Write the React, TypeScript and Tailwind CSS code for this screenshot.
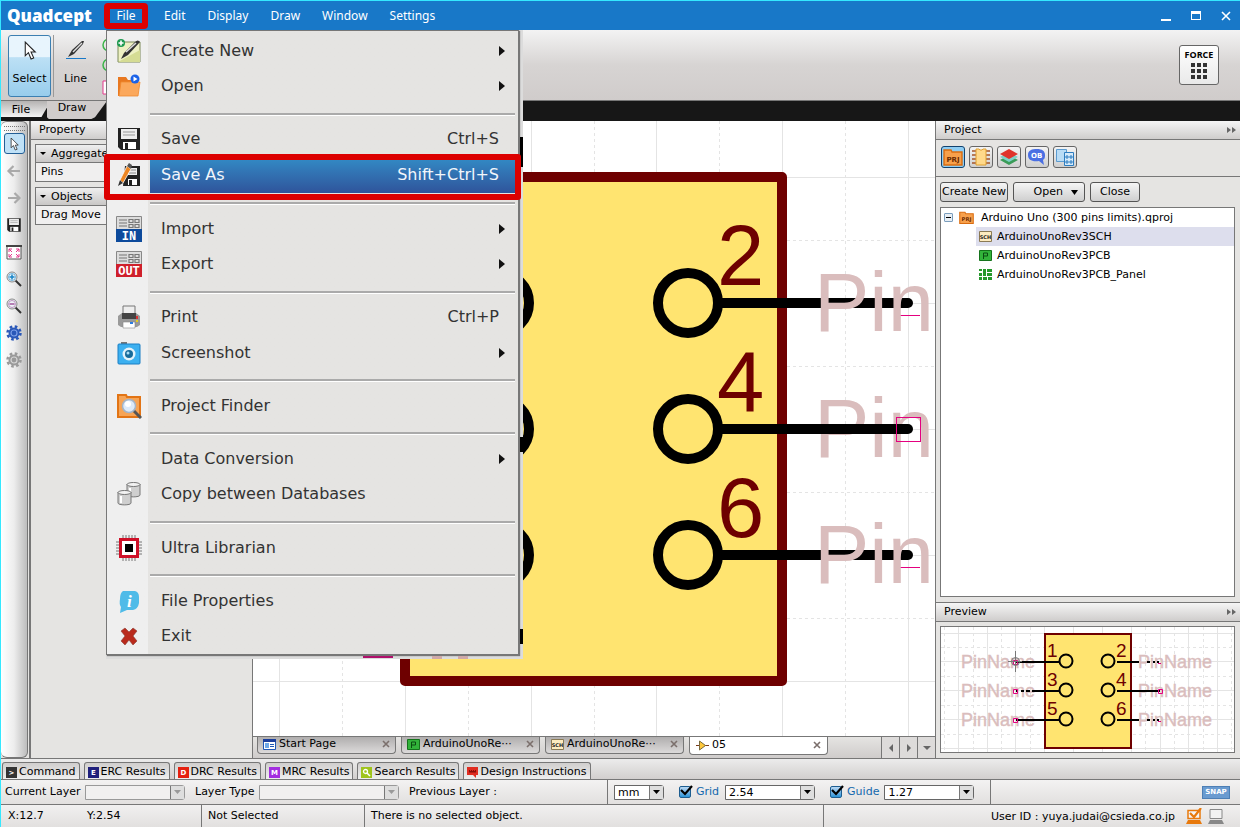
import React, {ReactElement, ReactNode} from "react";

type MenuEntry = {
    label: string;
    icon?: ReactNode;
    shortcut?: string;
    submenu?: boolean;
    active?: boolean;
};

const topMenus = ["Edit", "Display", "Draw", "Window", "Settings"];

const fileMenu: (MenuEntry | null)[] = [
    {label: "Create New", icon: <CreateIcon />, submenu: true},
    {label: "Open", icon: <OpenIcon />, submenu: true},
    null,
    {label: "Save", icon: <FloppyIcon />, shortcut: "Ctrl+S"},
    {label: "Save As", icon: <SaveAsIcon />, shortcut: "Shift+Ctrl+S", active: true},
    null,
    {label: "Import", icon: <InOutIcon text="IN" color="#0d4a9c" />, submenu: true},
    {label: "Export", icon: <InOutIcon text="OUT" color="#cf202b" />, submenu: true},
    null,
    {label: "Print", icon: <PrinterIcon />, shortcut: "Ctrl+P"},
    {label: "Screenshot", icon: <CameraIcon />, submenu: true},
    null,
    {label: "Project Finder", icon: <FinderIcon />},
    null,
    {label: "Data Conversion", submenu: true},
    {label: "Copy between Databases", icon: <DatabaseIcon />},
    null,
    {label: "Ultra Librarian", icon: <ChipIcon />},
    null,
    {label: "File Properties", icon: <InfoIcon />},
    {label: "Exit", icon: <ExitIcon />},
];

export default function App(): ReactElement {
    return (
        <div className="relative flex flex-col w-full min-h-screen bg-[#e5e4e2] border-l border-t border-[#35e8ff] text-[11px] leading-4 text-black font-['DejaVu_Sans',Verdana,sans-serif]">
            <TitleBar />
            <Ribbon />
            <div className="flex flex-row grow bg-[#e5e4e2]">
                <ToolStrip />
                <PropertyPanel />
                <Workspace />
                <ProjectPanel />
            </div>
            <ResultTabs />
            <LayerBar />
            <StatusBar />
            <FileMenu />
        </div>
    );
}

function TitleBar(): ReactElement {
    return (
        <header className="flex items-center h-[29px] bg-[#1878c8] text-white text-[12px] font-['Noto_Sans',sans-serif]">
            <h1 className="w-[95px] pl-[6px] text-[17px] font-extrabold font-['Open_Sans',sans-serif]">Quadcept</h1>
            <nav className="flex items-center gap-[18px]">
                <button className="ml-2 -mr-1 w-[44px] h-[26px] rounded-[4px] border-[6px] border-[#dc0000] bg-[#1878c8] leading-3">File</button>
                {topMenus.map((name) => (
                    <button key={name} className="px-[2px]">{name}</button>
                ))}
            </nav>
            <div className="flex items-center gap-[20px] ml-auto pr-[9px]">
                <button aria-label="Minimize" className="w-[10px] h-[10px] border-b-2 border-white" />
                <button aria-label="Maximize" className="w-[10px] h-[9px] border border-t-[3px] border-white" />
                <button aria-label="Close" className="w-[10px] h-[10px]">
                    <svg viewBox="0 0 10 10" className="w-full h-full" stroke="#fff" strokeWidth="1.6"><path d="M1 1l8 8M9 1l-8 8" /></svg>
                </button>
            </div>
        </header>
    );
}

function Ribbon(): ReactElement {
    return (
        <div>
            <div className="flex h-[71px] border-b border-[#777] bg-linear-to-b from-[#f3f3f3] via-[#d7d4d3] to-[#d0cccb]">
                <button className="flex flex-col items-center ml-[7px] mt-[5px] w-[43px] h-[62px] pt-[5px] rounded-[3px] border border-[#3c7fb1] bg-linear-to-b from-[#e8f5fd] from-35% via-[#bce0f5] via-36% to-[#98cdec]">
                    <Pointer className="w-[14px] h-[19px]" />
                    <span className="mt-[11px]">Select</span>
                </button>
                <button className="flex flex-col items-center ml-[2px] mt-[5px] w-[44px] h-[62px] pt-[5px] border-l border-[#999]">
                    <svg viewBox="0 0 20 20" className="w-[20px] h-[20px]">
                        <path d="M2 17l4-7L16 1l2 0-1 3-9 10z" fill="#333" />
                        <path d="M7 12l9-9" stroke="#ddd" strokeWidth="1.4" />
                        <path d="M0 18.500h20" stroke="#1878c8" />
                    </svg>
                    <span className="mt-[11px]">Line</span>
                </button>
                <svg viewBox="0 0 20 64" className="w-[20px] h-[64px] ml-[5px] mt-[4px]" fill="none">
                    <circle cx="7" cy="11" r="6" stroke="#3bb54a" strokeWidth="1.500" />
                    <circle cx="7" cy="31" r="6" stroke="#3bb54a" strokeWidth="1.500" />
                    <path d="M1 47h13v13H1z" stroke="#e4388c" fill="#fff" />
                </svg>
                <button className="flex flex-col items-center ml-auto mr-[21px] mt-[15px] w-[40px] h-[40px] pt-[3px] rounded-[3px] border border-[#666] bg-linear-to-b from-white to-[#e9e9e9]">
                    <span className="text-[9px] leading-3 font-bold font-['Open_Sans',sans-serif]">FORCE</span>
                    <svg viewBox="0 0 16 16" className="w-[16px] h-[16px] mt-[2px]" fill="#333">
                        {[0, 6, 12].map((x) => [0, 6, 12].map((y) => <rect key={`${x}-${y}`} x={x} y={y} width="4" height="4" />))}
                    </svg>
                </button>
            </div>
            <div className="flex h-[20px] bg-[#171717]">
                <button className="w-[46px] h-[16px] pt-px pr-[6px] leading-3 bg-linear-to-b from-[#b5b3b2] to-[#f5f5f5] [clip-path:polygon(0_0,100%_0,100%_40%,88%_100%,0_100%)]">File</button>
                <button className="w-[60px] h-[18px] pb-1 pr-[10px] bg-[#d0cccb] leading-3 [clip-path:polygon(0_0,100%_0,80%_90%,74%_100%,3%_100%,0_90%)]">Draw</button>
            </div>
        </div>
    );
}

function ToolStrip(): ReactElement {
    return (
        <div className="flex flex-col items-center shrink-0 w-[27px] mr-[1px] pt-[4px] rounded-md border border-[#777] border-l-0 bg-linear-to-r from-white via-[#ededed] to-[#bdbdbd]">
            <div className="w-[21px] h-[5px] border-y border-dotted border-[#777]" />
            <div className="flex flex-col items-center gap-[6px] mt-[2px]">
                <ToolButton label="Select" active><Pointer className="w-[9px] h-[14px]" /></ToolButton>
                <ToolButton label="Undo">
                    <svg viewBox="0 0 16 16" className="w-4 h-4" fill="none"><path d="M7.500 3L2.500 8l5 5M3 8h11" stroke="#aaa" strokeWidth="2.200" /></svg>
                </ToolButton>
                <ToolButton label="Redo">
                    <svg viewBox="0 0 16 16" className="w-4 h-4" fill="none"><path d="M8.500 3l5 5-5 5M13 8H2" stroke="#aaa" strokeWidth="2.200" /></svg>
                </ToolButton>
                <ToolButton label="Save"><span className="w-4 h-4"><FloppyIcon /></span></ToolButton>
                <ToolButton label="Fit">
                    <svg viewBox="0 0 16 16" className="w-4 h-4" fill="none">
                        <path d="M1 2h14v13H1z" fill="#fff" stroke="#555" />
                        <path d="M0 1h16v2H0z" fill="#444" />
                        <path d="M3 8V5h3M3 5l3 3M10 5h3v3M13 5l-3 3M3 10v3h3M3 13l3-3M10 13h3v-3M13 13l-3-3" stroke="#e4388c" />
                    </svg>
                </ToolButton>
                <ToolButton label="Zoom in"><Magnifier color="#1583c7" plus /></ToolButton>
                <ToolButton label="Zoom out"><Magnifier color="#a0569c" /></ToolButton>
                <ToolButton label="Settings"><Gear color="#2a58b8" inner="#7da0e8" /></ToolButton>
                <ToolButton label="Options"><Gear color="#999" inner="#d5d5d5" /></ToolButton>
            </div>
        </div>
    );
}

function ToolButton(props: {label: string; active?: boolean; children: ReactNode}): ReactElement {
    return (
        <button
            aria-label={props.label}
            className={props.active
                ? "flex items-center justify-center w-[21px] h-[21px] rounded-[3px] border border-[#235f96] bg-[#bfe1f7]"
                : "flex items-center justify-center w-[21px] h-[21px]"}
        >
            {props.children}
        </button>
    );
}

function PanelHeader(props: {title: string; arrows?: boolean}): ReactElement {
    return (
        <div className="flex items-center h-[19px] pl-2 pr-1 pb-px border-b border-[#777] bg-linear-to-b from-[#f5f5f5] to-[#cfcdcc]">
            <h2>{props.title}</h2>
            {props.arrows && (
                <svg viewBox="0 0 9 6" className="w-[9px] h-[6px] ml-auto" fill="#666"><path d="M0 0l4 3-4 3zM5 0l4 3-4 3z" /></svg>
            )}
        </div>
    );
}

function PropertyPanel(): ReactElement {
    return (
        <section className="shrink-0 w-[224px] border-l-2 border-r border-[#777]">
            <PanelHeader title="Property" />
            <div className="flex flex-col gap-[5px] pl-1 pt-1">
                <PropertyGroup title="Aggregate" value="Pins" />
                <PropertyGroup title="Objects" value="Drag Move" />
            </div>
        </section>
    );
}

function PropertyGroup(props: {title: string; value: string}): ReactElement {
    return (
        <div className="border border-[#777]">
            <button className="flex items-center w-full h-[18px] pl-1 gap-[5px] border-b border-[#777] bg-linear-to-b from-[#efefef] to-[#c9c7c6]">
                <svg viewBox="0 0 6 3" className="w-[6px] h-[3px]"><path d="M0 0h6L3 3z" /></svg>
                {props.title}
            </button>
            <div className="flex items-center h-[18px] pl-[5px] bg-[#f0efef]">{props.value}</div>
        </div>
    );
}

function Workspace(): ReactElement {
    return (
        <main className="flex flex-col grow min-w-0">
            <div className="grow bg-white">
                <svg viewBox="253 121 682 615" preserveAspectRatio="xMinYMin slice" className="block w-full h-full">
                    <g stroke="#e4e4e4">
                        {[279, 405, 531, 656, 782, 908].map((x) => <path key={x} d={`M${x}.5 121v615`} />)}
                        {[177, 303, 429, 555, 681].map((y) => <path key={y} d={`M253 ${y}.5h682`} />)}
                        <g strokeDasharray="3 3">
                            {[342, 468, 594, 719, 845].map((x) => <path key={x} d={`M${x}.5 121v615`} />)}
                            {[240, 366, 492, 618].map((y) => <path key={y} d={`M253 ${y}.5h682`} />)}
                        </g>
                    </g>
                    <rect x="405" y="177" width="377" height="504" fill="#ffe470" stroke="#6e0000" strokeWidth="10" strokeLinejoin="round" />
                    {[303, 429, 555].map((y, i) => (
                        <g key={y}>
                            {i === 1 && <PinText y={y} />}
                            <g fill="none" stroke="#000" strokeWidth="10" strokeLinecap="round">
                                <circle cx="499" cy={y} r="30" />
                                <circle cx="688" cy={y} r="30" />
                                <path d={`M722 ${y}H908`} />
                            </g>
                            {i === 1
                                ? <rect x="896.5" y={y - 11.5} width="24" height="24" fill="none" stroke="#e4007f" />
                                : <path d={`M900 ${y + 12}.5h20`} stroke="#e4007f" />}
                            {i !== 1 && <PinText y={y} />}
                            <text x="717" y={y - 18} fontSize="85" fill="#6e0000" fontFamily="Liberation Sans, Arial, sans-serif">{(i + 1) * 2}</text>
                        </g>
                    ))}
                </svg>
            </div>
            <div className="flex h-[22px] pl-1 gap-[5px] border-t border-[#777] bg-linear-to-b from-[#e5e4e2] to-[#cfcccb]">
                <DocTab title="Start Page" icon={<PageIcon />} />
                <DocTab title="ArduinoUnoRe···" icon={<PcbIcon />} />
                <DocTab title="ArduinoUnoRe···" icon={<SchIcon />} />
                <DocTab title="05" icon={<GateIcon />} active />
                <div className="flex ml-auto">
                    <StripButton label="Previous tab" d="M6 0L2 4l4 4z" />
                    <StripButton label="Next tab" d="M2 0l4 4-4 4z" />
                    <StripButton label="Tab list" d="M0 2h8L4 6z" />
                </div>
            </div>
        </main>
    );
}

function PinText(props: {y: number}): ReactElement {
    return <text x="814" y={props.y + 28} fontSize="83" fill="#dabdbd" fontFamily="Liberation Sans, Arial, sans-serif">Pin</text>;
}

function DocTab(props: {title: string; icon: ReactNode; active?: boolean}): ReactElement {
    return (
        <div
            className={props.active
                ? "flex items-center w-[139px] h-[18px] px-[6px] pb-px gap-[3px] rounded-b-[4px] border border-t-0 border-[#777] bg-white"
                : "flex items-center w-[139px] h-[17px] px-[5px] pb-[2px] gap-[3px] rounded-b-[4px] border border-t-0 border-[#777] bg-linear-to-b from-[#b0aeae] to-[#dcdada]"}
        >
            <span className="w-[13px] h-[11px]">{props.icon}</span>
            <button className="whitespace-nowrap">{props.title}</button>
            <button aria-label="Close tab" className="ml-auto">
                <svg viewBox="0 0 8 8" className="w-[8px] h-[8px]" stroke="#7b6f6c" strokeWidth="1.6"><path d="M1 1l6 6M7 1L1 7" /></svg>
            </button>
        </div>
    );
}

function StripButton(props: {label: string; d: string}): ReactElement {
    return (
        <button aria-label={props.label} className="flex items-center justify-center w-[18px] border-l border-[#777] bg-[#dddbda]">
            <svg viewBox="0 0 8 8" className="w-[8px] h-[8px]" fill="#666"><path d={props.d} /></svg>
        </button>
    );
}

function ProjectPanel(): ReactElement {
    return (
        <aside className="flex flex-col shrink-0 w-[305px] border-l border-[#777]">
            <PanelHeader title="Project" arrows />
            <div className="flex gap-1 h-[37px] pl-[5px] pt-[6px] border-b border-[#777]">
                <PanelButton label="Project" active><PrjIcon /></PanelButton>
                <PanelButton label="Components">
                    <svg viewBox="0 0 20 18" className="w-full h-full">
                        <path d="M1 3h18M1 7h18M1 11h18M1 15h18" stroke="#a5562a" strokeWidth="1.300" />
                        <path d="M5 1h3l1 1h2l1-1h3v16H5z" fill="#ffd98a" stroke="#e0a030" />
                    </svg>
                </PanelButton>
                <PanelButton label="Layers">
                    <svg viewBox="0 0 20 18" className="w-full h-full">
                        <path d="M1 12l9-5 9 5-9 5z" fill="#3a9c58" /><path d="M1 9l9-5 9 5-9 5z" fill="#7fd0c8" /><path d="M1 6l9-5 9 5-9 5z" fill="#e0332b" />
                    </svg>
                </PanelButton>
                <PanelButton label="Object browser">
                    <svg viewBox="0 0 20 18" className="w-full h-full">
                        <path d="M10 1c5 0 8 2 8 6s-1 4-2 5l1 5-5-4c-7 1-11-1-11-6s4-6 9-6z" fill="#4a6fe3" />
                        <text x="4" y="10" fontSize="7" fontWeight="bold" fill="#fff">OB</text>
                    </svg>
                </PanelButton>
                <PanelButton label="Replace">
                    <svg viewBox="0 0 20 18" className="w-full h-full">
                        <path d="M1.500 1.500h10v12h-10z" fill="#b9dcf5" stroke="#5b9bd0" /><path d="M9.500 4.500h9v13h-9z" fill="#d5eafa" stroke="#2d7dc0" />
                        <path d="M11 8h2v2h-2zM15 8h2v2h-2zM11 13h2v2h-2zM15 13h2v2h-2z" fill="none" stroke="#2d7dc0" />
                    </svg>
                </PanelButton>
            </div>
            <div className="flex gap-[5px] pl-[4px] pt-[5px] pb-[5px]">
                <button className="w-[68px] h-[20px] leading-3 whitespace-nowrap rounded-[3px] border border-[#555] bg-linear-to-b from-[#f5f5f5] to-[#cfcfcf]">Create New</button>
                <button className="flex items-center justify-end w-[72px] h-[20px] pr-[6px] gap-2 rounded-[3px] border border-[#555] bg-linear-to-b from-[#f5f5f5] to-[#cfcfcf]">
                    Open
                    <svg viewBox="0 0 7 5" className="w-[7px] h-[5px]"><path d="M0 0h7L3.500 5z" /></svg>
                </button>
                <button className="w-[50px] h-[20px] leading-3 rounded-[3px] border border-[#555] bg-linear-to-b from-[#f5f5f5] to-[#cfcfcf]">Close</button>
            </div>
            <div className="grow ml-[4px] mr-[5px] border border-[#777] bg-white">
                <div className="flex items-center h-[19px] pl-[3px]">
                    <button aria-label="Collapse" className="flex items-center justify-center w-[9px] h-[9px] rounded-[1px] border border-[#7b9ebd] bg-[#e8eef4]"><span className="w-[5px] h-px bg-black" /></button>
                    <span className="w-[15px] h-[15px] ml-[6px] mr-[7px]"><PrjIcon /></span>
                    Arduino Uno (300 pins limits).qproj
                </div>
                <ul className="pl-[35px]">
                    <li className="flex items-center gap-[5px] h-[19px] pl-[3px] bg-[#dddeed]"><span className="w-[13px] h-[11px]"><SchIcon /></span>ArduinoUnoRev3SCH</li>
                    <li className="flex items-center gap-[5px] h-[19px] pl-[3px]"><span className="w-[13px] h-[11px]"><PcbIcon /></span>ArduinoUnoRev3PCB</li>
                    <li className="flex items-center gap-[5px] h-[19px] pl-[3px]">
                        <svg viewBox="0 0 13 11" className="w-[13px] h-[11px]" fill="#27982c"><path d="M0 0h3v2H0zM0 4h3v3H0zM0 8h3v3H0zM4 0h3v7H4zM8 0h5v3H8zM8 4h5v3H8zM4 8h4v3H4zM9 8h4v3H9z" /></svg>
                        ArduinoUnoRev3PCB_Panel
                    </li>
                </ul>
            </div>
            <div className="mt-[5px] border-t border-[#777]">
                <PanelHeader title="Preview" arrows />
            </div>
            <div className="mt-1 mb-[5px] ml-[4px] mr-[5px] border border-[#777] bg-white">
                <Preview />
            </div>
        </aside>
    );
}

function PanelButton(props: {label: string; active?: boolean; children: ReactNode}): ReactElement {
    return (
        <button
            aria-label={props.label}
            className={props.active
                ? "w-[24px] h-[22px] p-px rounded-[3px] border border-[#12426e] bg-[#8ecdf3]"
                : "w-[24px] h-[22px] p-px rounded-[3px] border border-[#666] bg-linear-to-b from-[#f4f4f4] to-[#cfcfcf]"}
        >
            {props.children}
        </button>
    );
}

function Preview(): ReactElement {
    const rows = [661, 690, 719];
    return (
        <svg viewBox="941 627 293 125" className="block w-full" fontFamily="Liberation Sans, Arial, sans-serif">
            <g stroke="#e4e4e4" fill="none">
                {[958, 987, 1015, 1044, 1073, 1102, 1131, 1160, 1188, 1217].map((x) => <path key={x} d={`M${x}.5 627v125`} />)}
                {[633, 661, 690, 719, 748].map((y) => <path key={y} d={`M941 ${y}.5h294`} />)}
                <g strokeDasharray="3 3">
                    {[944, 973, 1001, 1030, 1145, 1174, 1203, 1231].map((x) => <path key={x} d={`M${x}.5 627v125`} />)}
                    {[647, 676, 705, 734].map((y) => <path key={y} d={`M941 ${y}.5h294`} />)}
                </g>
            </g>
            <rect x="1045" y="634" width="86" height="114" fill="#ffe470" stroke="#6e0000" strokeWidth="2" />
            {rows.map((y, i) => (
                <g key={y}>
                    <g fontSize="18" fill="#dabdbd" stroke="#dabdbd" strokeWidth=".4">
                        <text x="961" y={y + 7}>PinName</text>
                        <text x="1138" y={y + 7}>PinName</text>
                    </g>
                    <g fill="none" stroke="#000" strokeWidth="2">
                        <circle cx="1066" cy={y} r="6.500" />
                        <circle cx="1108" cy={y} r="6.500" />
                        <path d={i === 1 ? `M1016 ${y + 1}h2m3 0h3m2 0h4m2 0h27` : `M1016 ${y + 1}h43`} />
                        <path d={i === 1 ? `M1117 ${y + 1}h43` : `M1117 ${y + 1}h22m8 0h3m3 0h2m2 0h2`} />
                    </g>
                    <path d={`M1013.500 ${y - 1}.5h4v4h-4z`} fill="none" stroke="#e4007f" />
                    {i === 1
                        ? <path d={`M1158.500 ${y - 1}.5h4v4h-4z`} fill="none" stroke="#e4007f" />
                        : <path d={`M1158 ${y + 2}.5h3`} stroke="#e4007f" />}
                    <g fontSize="19" fill="#6e0000">
                        <text x="1047" y={y - 4}>{i * 2 + 1}</text>
                        <text x="1116" y={y - 4}>{i * 2 + 2}</text>
                    </g>
                </g>
            ))}
            <g fill="none" stroke="#777"><circle cx="1015.500" cy="661.500" r="4" /><path d="M1015.500 651v21M1008 661.500h14" /></g>
        </svg>
    );
}

function ResultTabs(): ReactElement {
    return (
        <div className="flex items-end h-[21px] pl-px gap-1 border-t border-[#777] bg-linear-to-b from-[#ececec] to-[#d2cfce]">
            <ResultTab title="Command" icon={<LetterIcon color="#333" text=">" />} />
            <ResultTab title="ERC Results" icon={<LetterIcon color="#20207c" text="E" />} />
            <ResultTab title="DRC Results" icon={<LetterIcon color="#e5200f" text="D" />} />
            <ResultTab title="MRC Results" icon={<LetterIcon color="#a32ee0" text="M" />} />
            <ResultTab
                title="Search Results"
                icon={(
                    <svg viewBox="0 0 11 11" className="w-[11px] h-[11px]">
                        <path d="M0 0h11v11H0z" fill="#9fc41c" /><circle cx="4.500" cy="4.500" r="2" fill="none" stroke="#fff" strokeWidth="1.300" /><path d="M6 6l3 3" stroke="#fff" strokeWidth="1.500" />
                    </svg>
                )}
            />
            <ResultTab
                title="Design Instructions"
                icon={(
                    <svg viewBox="0 0 11 11" className="w-[11px] h-[11px]">
                        <path d="M0 0h11v8H9v3L6 8H0z" fill="#e02c20" /><path d="M2 5.500V3h1v1h1V3h1v1h1V3h1v1h1V3h1v2.500z" fill="#8a0d08" />
                    </svg>
                )}
            />
        </div>
    );
}

function ResultTab(props: {title: string; icon: ReactNode}): ReactElement {
    return (
        <button className="flex items-center h-[17px] pt-[2px] px-[3px] gap-[2px] rounded-t-[3px] border border-b-0 border-[#777] bg-linear-to-b from-[#d0cecd] to-[#efefef] whitespace-nowrap">
            {props.icon}
            {props.title}
        </button>
    );
}

function LayerBar(): ReactElement {
    return (
        <div className="flex items-stretch h-[25px] border-t border-[#777] bg-linear-to-b from-[#f3f2f2] to-[#e2e0df]">
            <div className="flex items-center w-[607px] shrink-0 pl-1 gap-[6px] whitespace-nowrap border-r border-[#777]">
                <label htmlFor="current-layer" className="w-[74px]">Current Layer</label>
                <div className="w-[100px]"><Select id="current-layer" value="" disabled /></div>
                <label htmlFor="layer-type" className="ml-1 w-[58px]">Layer Type</label>
                <div className="w-[140px]"><Select id="layer-type" value="" disabled /></div>
                <span className="ml-1">Previous Layer :</span>
            </div>
            <div className="flex items-center w-[383px] shrink-0 pl-[6px] border-r border-[#777]">
                <div className="w-[50px] mr-[15px]"><Select id="unit" label="Unit" value="mm" /></div>
                <CheckLabel label="Grid" />
                <div className="w-[90px] ml-[6px] mr-[15px]"><Select id="grid" label="Grid size" value="2.54" /></div>
                <CheckLabel label="Guide" />
                <div className="w-[90px] ml-[5px]"><Select id="guide" label="Guide size" value="1.27" /></div>
            </div>
            <button className="self-center ml-auto mr-[10px] w-[28px] h-[13px] border border-[#4d7fb5] bg-[#6a9bd0] text-white text-[7px] leading-[9px] font-bold">SNAP</button>
        </div>
    );
}

function Select(props: {id: string; value: string; label?: string; disabled?: boolean}): ReactElement {
    return (
        <div className="relative">
            <select
                id={props.id}
                aria-label={props.label}
                disabled={props.disabled}
                className={props.disabled
                    ? "block appearance-none w-full h-[15px] rounded-r-[3px] border border-[#999] bg-[#f1f0f0]"
                    : "block appearance-none w-full h-[15px] pl-[3px] leading-[13px] rounded-r-[3px] border border-[#666] bg-white"}
            >
                <option>{props.value}</option>
            </select>
            <span className="absolute right-px top-px flex items-center justify-center w-[14px] h-[13px] border-l border-[#777] bg-[#dedede] pointer-events-none">
                <svg viewBox="0 0 7 4" className="w-[7px] h-[4px]" fill={props.disabled ? "#999" : "#000"}><path d="M0 0h7L3.500 4z" /></svg>
            </span>
        </div>
    );
}

function CheckLabel(props: {label: string}): ReactElement {
    return (
        <label className="relative flex items-center gap-[5px] text-[#1468ad]">
            <input type="checkbox" defaultChecked className="appearance-none w-[12px] h-[12px] rounded-[2px] border border-[#1d5d90] bg-linear-to-b from-[#b8d8f3] to-[#2494d8]" />
            <svg viewBox="0 0 14 12" className="absolute left-0 top-[1px] w-[14px] h-[12px] pointer-events-none" fill="none" stroke="#000" strokeWidth="2.200"><path d="M2 5l4 4 7-8" /></svg>
            {props.label}
        </label>
    );
}

function StatusBar(): ReactElement {
    return (
        <footer className="flex items-stretch h-[23px] border-t border-[#777] bg-linear-to-b from-[#f1f0f0] to-[#e2e0df] leading-[21px]">
            <div className="flex w-[201px] pl-[7px] border-r border-[#777]">
                <span className="w-[79px]">X:12.7</span>
                <span>Y:2.54</span>
            </div>
            <div className="w-[163px] pl-[6px] border-r border-[#777]">Not Selected</div>
            <div className="w-[459px] pl-[6px] border-r border-[#777]">There is no selected object.</div>
            <div className="flex items-center ml-auto pr-4 gap-[6px] whitespace-nowrap">
                <span className="mr-[5px]">User ID : yuya.judai@csieda.co.jp</span>
                <svg viewBox="0 0 16 16" className="w-4 h-4" fill="none"><path d="M2 2.500h12v8H2z" fill="#f5f5f5" stroke="#e8790c" strokeWidth="1.500" /><path d="M2 12h12l2 4H0z" fill="#e8790c" /><path d="M4 5l4 4 7-9" stroke="#e8790c" strokeWidth="2.200" /></svg>
                <svg viewBox="0 0 16 16" className="w-4 h-4"><path d="M2 1.500h12v9H2z" fill="#f2f2f2" stroke="#888" /><path d="M2 12h12l2 4H0z" fill="#888" /></svg>
            </div>
        </footer>
    );
}

function FileMenu(): ReactElement {
    return (
        <div className="absolute left-[105px] top-[29px] w-[417px] pr-1 pb-1 bg-[#dcdcdc] text-[16px] leading-5 text-[#333]">
            {/* canvas parts that show through the shadow */}
            <span className="absolute right-0 top-[107px] w-[3px] h-[30px] bg-black" />
            <span className="absolute right-0 top-[407px] w-[3px] h-[15px] bg-black" />
            <span className="absolute right-0 top-[599px] w-[3px] h-[15px] bg-black" />
            <span className="absolute left-[257px] bottom-px w-[30px] h-[2px] bg-[#b0106c]" />
            <span className="absolute left-[326px] bottom-0 w-[10px] h-[3px] bg-[#cfa9a9]" />
            <span className="absolute left-[352px] bottom-0 w-[10px] h-[3px] bg-[#cfa9a9]" />
            <ul className="flex flex-col h-[625px] pt-[2px] border border-[#777] bg-linear-to-r from-[#efefef] from-10% to-[#e5e4e2] to-10% shadow-[1px_1px_1px_#777]">
                {fileMenu.map((entry, i) => entry
                    ? <MenuRow key={entry.label} entry={entry} />
                    : (
                        <li key={i} className="flex items-center flex-1 pl-[43px] pr-[3px]">
                            <hr className="w-full h-[3px] mt-[3px] border-t-2 border-b border-t-[#aaa] border-b-white" />
                        </li>
                    ))}
            </ul>
        </div>
    );
}

function MenuRow(props: {entry: MenuEntry}): ReactElement {
    const {label, icon, shortcut, submenu, active} = props.entry;
    return (
        <li className={active ? "relative z-10 flex flex-2" : "flex flex-2"}>
            <span className="flex items-center justify-center shrink-0 w-[43px]"><span className="w-[26px] h-[26px]">{icon}</span></span>
            <button
                className={active
                    ? "flex items-center grow h-[34px] mt-[2px] mr-[3px] pb-[2px] pl-[11px] pr-[16px] bg-linear-to-b from-[#3289c4] to-[#2f549b] text-[#f2f6fb]"
                    : "flex items-center grow mr-[3px] pl-[11px] pr-[16px]"}
            >
                {label}
                {shortcut && <span className="ml-auto">{shortcut}</span>}
                {submenu && <svg viewBox="0 0 6 10" className="w-[6px] h-[10px] ml-auto -mr-[6px]"><path d="M0 0l6 5-6 5z" fill="#111" /></svg>}
            </button>
            {active && <span className="absolute -left-[3px] -right-[3px] -top-[3px] -bottom-[7px] rounded-[3px] border-[6px] border-[#dc0000] pointer-events-none" />}
        </li>
    );
}

function Pointer(props: {className: string}): ReactElement {
    return <svg viewBox="0 0 12 18" className={props.className}><path d="M1.500 1v13l3-3 2.500 6 2.500-1L7 10.500h4z" fill="#fff" stroke="#222" /></svg>;
}

function Magnifier(props: {color: string; plus?: boolean}): ReactElement {
    return (
        <svg viewBox="0 0 16 16" className="w-4 h-4" fill="none">
            <path d="M9 9l6 6" stroke="#333" strokeWidth="2" />
            <circle cx="6" cy="6" r="5" fill="#eef4f8" stroke="#888" />
            <circle cx="6" cy="6" r="3.500" stroke={props.color} opacity=".6" />
            <path d={props.plus ? "M3.500 6h5M6 3.500v5" : "M3.500 6h5"} stroke={props.color} strokeWidth="1.500" />
        </svg>
    );
}

function Gear(props: {color: string; inner: string}): ReactElement {
    return (
        <svg viewBox="0 0 16 16" className="w-4 h-4" fill="none">
            <circle cx="8" cy="8" r="6.500" stroke={props.color} strokeWidth="2.500" strokeDasharray="2.600 2.500" />
            <circle cx="8" cy="8" r="5.500" fill={props.color} />
            <circle cx="8" cy="8" r="3" fill={props.color} stroke={props.inner} strokeWidth="1.200" />
        </svg>
    );
}

function LetterIcon(props: {color: string; text: string}): ReactElement {
    return (
        <svg viewBox="0 0 11 11" className="w-[11px] h-[11px]">
            <path d="M0 0h11v11H0z" fill={props.color} />
            <text x="5.500" y="8" textAnchor="middle" fontSize="7" fontWeight="bold" fill="#fff">{props.text}</text>
        </svg>
    );
}

function PrjIcon(): ReactElement {
    return (
        <svg viewBox="0 0 20 18" className="block w-full h-full">
            <path d="M1 2h7l1 2h10v13H1z" fill="#f7a04b" stroke="#d96c10" strokeWidth="1.400" />
            <text x="10" y="14" textAnchor="middle" fontSize="7" fontWeight="bold" fill="#6b2a00">PRJ</text>
        </svg>
    );
}

function SchIcon(): ReactElement {
    return (
        <svg viewBox="0 0 13 11" className="block w-full h-full">
            <path d="M.5.5h12v10H.5z" fill="#fdebc0" stroke="#8a7a55" />
            <text x="6.500" y="8" textAnchor="middle" fontSize="5" fontWeight="bold" fill="#222">SCH</text>
        </svg>
    );
}

function PcbIcon(): ReactElement {
    return (
        <svg viewBox="0 0 13 11" className="block w-full h-full">
            <path d="M.5.5h12v10H.5z" fill="#32b33a" stroke="#15731c" />
            <path d="M4.500 9V3h4v3h-4" fill="none" stroke="#0b4d12" />
        </svg>
    );
}

function PageIcon(): ReactElement {
    return (
        <svg viewBox="0 0 13 11" className="block w-full h-full">
            <path d="M.5.5h12v10H.5z" fill="#fff" stroke="#1f57b5" /><path d="M0 0h13v3H0z" fill="#1c3f9c" />
            <path d="M2 4h4v5H2z" fill="#6fa8e8" /><path d="M7 5.500h4M7 7.500h4" stroke="#1f57b5" />
        </svg>
    );
}

function GateIcon(): ReactElement {
    return <svg viewBox="0 0 13 11" className="block w-full h-full"><path d="M0 5.500h13" stroke="#7a3b1a" /><path d="M3.500 1l6 4.500-6 4.500z" fill="#ffc93c" stroke="#7a6a3a" /></svg>;
}

function CreateIcon(): ReactElement {
    return (
        <svg viewBox="0 0 26 26">
            <path d="M2 4h22v20H2z" fill="#edf0c3" stroke="#7c8a5a" />
            <path d="M2 24h22V12z" fill="#d5dc94" />
            <circle cx="5" cy="5" r="4" fill="#1d9a50" /><path d="M2.500 5h5M5 2.500v5" stroke="#fff" strokeWidth="1.600" />
            <path d="M5 21l3-6L19 4q3-3 5 0L12 17z" fill="#333" /><path d="M10 14L20 5" stroke="#ddd" strokeWidth="1.600" />
        </svg>
    );
}

function OpenIcon(): ReactElement {
    return (
        <svg viewBox="0 0 26 26">
            <path d="M2 4h8l2 3h8v16H2z" fill="#e87820" /><path d="M5 9h19l-2 14H3z" fill="#fba85c" stroke="#f08a30" strokeWidth=".8" />
            <circle cx="19" cy="6" r="4.500" fill="#1b62e8" /><path d="M17.500 3.500l4 2.500-4 2.500z" fill="#fff" />
        </svg>
    );
}

function FloppyIcon(): ReactElement {
    return (
        <svg viewBox="0 0 26 26" className="block w-full h-full">
            <path d="M2 2h22v22H5l-3-3z" fill="#222" /><path d="M5 3h16v10H5z" fill="#eee" />
            <path d="M7 6h12M7 9h12" stroke="#999" /><path d="M7 16h13v7H7z" fill="#fff" /><path d="M9 17h3v6H9z" fill="#222" />
        </svg>
    );
}

function SaveAsIcon(): ReactElement {
    return (
        <svg viewBox="0 0 26 26">
            <path d="M9 4h15v20H7z" fill="#222" /><path d="M12 6h9v7h-9z" fill="#eee" /><path d="M13 8h7M13 11h7" stroke="#888" />
            <path d="M12 17h9v6h-9z" fill="#fff" /><path d="M13 18h3v5h-3z" fill="#222" />
            <path d="M4 18L11 4l4 3-8 14z" fill="#ee8622" stroke="#fff" strokeWidth=".8" /><path d="M11 4l2-3 3 2-1 4z" fill="#555" /><path d="M4 18l3 3-5 3z" fill="#333" />
        </svg>
    );
}

function InOutIcon(props: {text: string; color: string}): ReactElement {
    return (
        <svg viewBox="0 0 26 26">
            <path d="M.5.5h25v13H.5z" fill="#ddd" stroke="#888" />
            <path d="M3 4h8M3 7h8M3 10h8M13 3.500h4v3h-4zM19 3.500h4v3h-4zM13 8.500h4v3h-4zM19 8.500h4v3h-4z" fill="none" stroke="#777" strokeWidth="1.200" />
            <path d="M0 13h26v13H0z" fill={props.color} />
            <text x="13" y="23.500" textAnchor="middle" fontSize="12" fontWeight="bold" fill="#fff" fontFamily="Liberation Mono, monospace">{props.text}</text>
        </svg>
    );
}

function PrinterIcon(): ReactElement {
    return (
        <svg viewBox="0 0 26 26">
            <path d="M7 2h12v9H7z" fill="#eee" stroke="#777" /><path d="M2 12l4-3h14l4 3v9l-3 2H5l-3-2z" fill="#9a9a9a" />
            <path d="M6 9h14v6H6z" fill="#444" /><path d="M7 18h12v6H7z" fill="#fff" stroke="#888" strokeWidth=".6" />
            <path d="M14 18h3v2h-3z" fill="#2a7de0" /><path d="M20 16h2v2h-2z" fill="#e6cf1c" /><path d="M20 12h2v3h-2z" fill="#d33" />
        </svg>
    );
}

function CameraIcon(): ReactElement {
    return (
        <svg viewBox="0 0 26 26">
            <path d="M5 2h6v3H5z" fill="#777" /><rect x="2" y="4" width="22" height="20" rx="1" fill="#3cb0f0" stroke="#1b7ec4" />
            <circle cx="13" cy="14" r="6.500" fill="#e4f2fa" /><circle cx="13" cy="14" r="4" fill="#176a9a" /><circle cx="12" cy="13" r="1.500" fill="#a8dcf5" />
        </svg>
    );
}

function FinderIcon(): ReactElement {
    return (
        <svg viewBox="0 0 26 26">
            <path d="M2 2h8l1 2h13v20H2z" fill="#f6a456" stroke="#e27415" strokeWidth="2" />
            <path d="M17 17l8 8" stroke="#555" strokeWidth="3" /><circle cx="13" cy="13" r="6.500" fill="#dceafa" stroke="#a3b4c8" strokeWidth="1.500" /><circle cx="12" cy="11" r="3" fill="#fff" />
        </svg>
    );
}

function Cylinder(props: {x: number; y: number}): ReactElement {
    return (
        <g transform={`translate(${props.x} ${props.y})`} stroke="#777">
            <path d="M0 2v11c0 2.500 13 2.500 13 0V2" fill="#cfcfcf" /><ellipse cx="6.500" cy="2.500" rx="6.500" ry="2" fill="#f2f2f2" /><path d="M3 6v7" stroke="#fff" strokeWidth="2" />
        </g>
    );
}

function DatabaseIcon(): ReactElement {
    return <svg viewBox="0 0 26 26"><Cylinder x={11} y={1} /><Cylinder x={2} y={9} /></svg>;
}

function ChipIcon(): ReactElement {
    return (
        <svg viewBox="0 0 26 26">
            <path d="M7 0v26M10 0v26M13 0v26M16 0v26M19 0v26M0 7h26M0 10h26M0 13h26M0 16h26M0 19h26" stroke="#777" />
            <path d="M4.500 4.500h17v17h-17z" fill="#fff" stroke="#cf1028" strokeWidth="3" /><path d="M9 9h8v8H9z" />
        </svg>
    );
}

function InfoIcon(): ReactElement {
    return (
        <svg viewBox="0 0 26 26">
            <path d="M7 3h12q4 1 4 6v6q-1 6-6 7h-6l-7 3 1-6q-2-3-1-8 0-6 3-8z" fill="#4fbbe8" />
            <text x="11" y="19" fontSize="17" fontWeight="bold" fontStyle="italic" fill="#fff" fontFamily="Liberation Serif, serif">i</text>
        </svg>
    );
}

function ExitIcon(): ReactElement {
    return <svg viewBox="0 0 26 26"><path d="M5 8l4-3 4 4 4-4 4 3-4 5 4 5-4 4-4-5-4 5-4-4 4-5z" fill="#b92a1c" stroke="#8a3a30" strokeWidth=".6" /></svg>;
}
